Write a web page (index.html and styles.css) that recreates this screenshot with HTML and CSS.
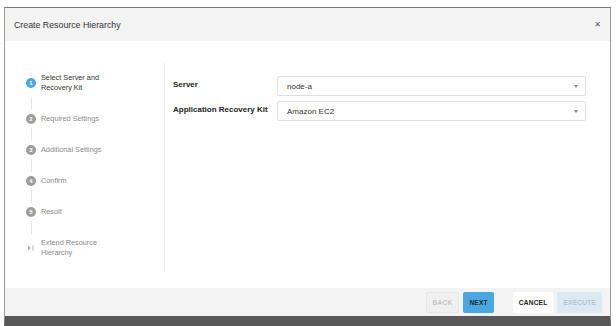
FILE: index.html
```html
<!DOCTYPE html>
<html>
<head>
    <title>Create Resource Hierarchy</title>
    <link rel="stylesheet" href="styles.css">
</head>
<body>
    <div class="dialog">
        <div class="dialog-header">
            <span class="dialog-title">Create Resource Hierarchy</span>
            <span class="close">&#x2715;</span>
        </div>

        <div class="dialog-body">
            <ul class="steps">
                <li class="step active">
                    <span class="num">1</span>
                    <span class="label">Select Server and<br>Recovery Kit</span>
                </li>
                <li class="connector"></li>
                <li class="step">
                    <span class="num">2</span>
                    <span class="label">Required Settings</span>
                </li>
                <li class="connector"></li>
                <li class="step">
                    <span class="num">3</span>
                    <span class="label">Additional Settings</span>
                </li>
                <li class="connector"></li>
                <li class="step">
                    <span class="num">4</span>
                    <span class="label">Confirm</span>
                </li>
                <li class="connector"></li>
                <li class="step">
                    <span class="num">5</span>
                    <span class="label">Result</span>
                </li>
                <li class="connector"></li>
                <li class="step extend">
                    <svg class="skip" width="10" height="6" viewBox="0 0 10 6">
                        <path d="M2 0.5 L5 3 L2 5.5 Z" fill="#b0b0b0"/>
                        <rect x="6.5" y="0.5" width="1" height="5" fill="#b0b0b0"/>
                    </svg>
                    <span class="label">Extend Resource<br>Hierarchy</span>
                </li>
            </ul>

            <div class="form">
                <div class="form-row">
                    <label>Server</label>
                    <div class="select">
                        <span>node-a</span>
                        <span class="caret"></span>
                    </div>
                </div>
                <div class="form-row">
                    <label>Application Recovery Kit</label>
                    <div class="select">
                        <span>Amazon EC2</span>
                        <span class="caret"></span>
                    </div>
                </div>
            </div>
        </div>

        <div class="dialog-footer">
            <button class="btn disabled">BACK</button>
            <button class="btn primary">NEXT</button>
            <button class="btn plain gap">CANCEL</button>
            <button class="btn disabled-blue">EXECUTE</button>
        </div>
    </div>
</body>
</html>
```

FILE: styles.css
```css
body {
    margin: 0;
    padding: 7px 0 0 4px;
    background-color: white;
    font-family: "Liberation Sans", Arial, sans-serif;
    color: #333;
}
.dialog {
    width: 607px;
    height: 319px;
    box-sizing: border-box;
    border: 1px solid #9a9a9a;
    border-top-color: #7a7a7a;
    border-bottom: 10px solid #585858;
    display: flex;
    flex-direction: column;
    background-color: white;
}
.dialog-header {
    height: 33px;
    background-color: #f3f3f3;
    display: flex;
    align-items: center;
    justify-content: space-between;
    padding: 0 9px 0 9px;
}
.dialog-title {
    font-size: 8.8px;
    color: #333;
}
.close {
    font-family: "DejaVu Sans", sans-serif;
    font-size: 8px;
    color: #555;
}
.dialog-body {
    flex: 1;
    display: flex;
    padding: 21px 0 0 0;
}
.steps {
    list-style: none;
    margin: 0;
    padding: 11px 0 0 21px;
    width: 160px;
    height: 210px;
    box-sizing: border-box;
    border-right: 1px solid #ececec;
}
.step {
    display: flex;
    align-items: center;
    font-size: 7.3px;
    line-height: 10px;
    color: #8a8a8a;
}
.step .num {
    width: 10px;
    height: 10px;
    border-radius: 50%;
    background-color: #9e9e9e;
    color: white;
    font-size: 6px;
    font-weight: bold;
    display: flex;
    align-items: center;
    justify-content: center;
    margin-right: 5px;
    flex-shrink: 0;
}
.step.active {
    color: #333;
}
.step.active .num {
    background-color: #4aa8e0;
}
.step .skip {
    margin-right: 5px;
    flex-shrink: 0;
}
.connector {
    width: 1px;
    height: 13px;
    margin: 4px 0 4px 5px;
    background-color: #e6e6e6;
}
.form {
    flex: 1;
    padding: 14px 24px 0 8px;
}
.form-row {
    display: flex;
    align-items: flex-start;
    margin-bottom: 5px;
}
.form-row label {
    width: 104px;
    font-size: 8px;
    font-weight: bold;
    color: #222;
    padding-top: 4px;
}
.select {
    flex: 1;
    height: 20px;
    box-sizing: border-box;
    border: 1px solid #e0e0e0;
    border-radius: 2px;
    display: flex;
    align-items: center;
    justify-content: space-between;
    padding: 0 7px 0 9px;
    font-size: 8px;
    color: #333;
}
.caret {
    width: 0;
    height: 0;
    border-left: 2.5px solid transparent;
    border-right: 2.5px solid transparent;
    border-top: 3px solid #888;
}
.dialog-footer {
    height: 28px;
    background-color: #f3f3f3;
    display: flex;
    align-items: center;
    justify-content: flex-end;
    padding: 0 8px 0 0;
}
.btn {
    height: 21px;
    border: none;
    border-radius: 2px;
    font-family: "Liberation Sans", Arial, sans-serif;
    font-size: 6.6px;
    font-weight: bold;
    letter-spacing: 0.2px;
    padding: 0 6px;
    margin-left: 4px;
    cursor: pointer;
}
.btn.gap {
    margin-left: 19px;
}
.btn.disabled {
    background-color: #f0f0f0;
    color: #c4c4c4;
    border: 1px solid #e6e6e6;
}
.btn.primary {
    background-color: #4aa8e0;
    color: #1b2a36;
}
.btn.plain {
    background-color: white;
    color: #222;
}
.btn.disabled-blue {
    background-color: #dbe9f3;
    color: #b5c3cd;
}
```
